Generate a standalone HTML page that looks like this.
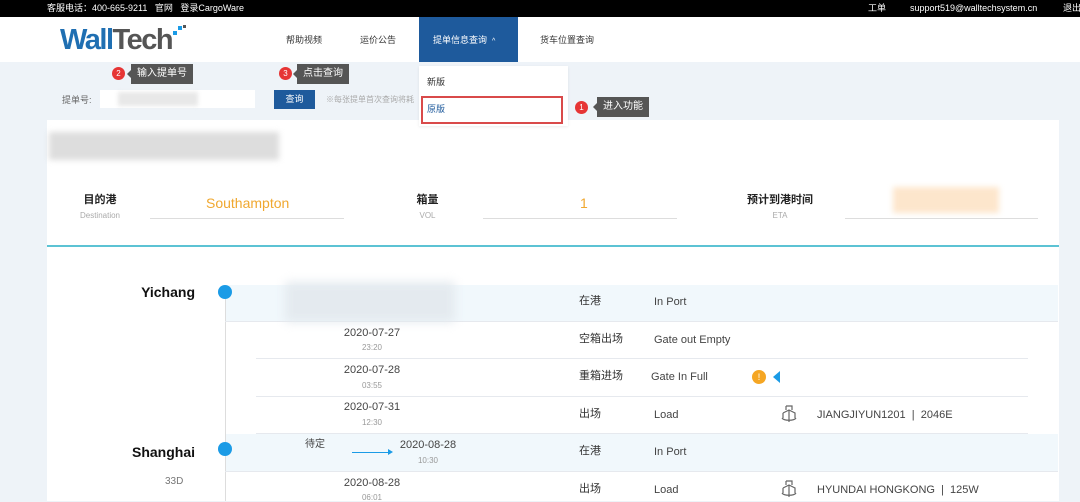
<!DOCTYPE html>
<html><head><meta charset="utf-8"><style>
*{margin:0;padding:0;box-sizing:border-box}
body{width:1080px;height:501px;overflow:hidden;background:#eef3f8;font-family:"Liberation Sans","Noto Sans CJK SC",sans-serif;position:relative;color:#333}
.a{position:absolute;white-space:nowrap;line-height:1.15}
.top{left:0;top:0;width:1080px;height:17px;background:#000;color:#fff;font-size:9px;line-height:17px}
.hdr{left:0;top:17px;width:1080px;height:45px;background:#fff}
.nav{font-size:9px;color:#333;top:35px}
.tip{background:#555;color:#fff;font-size:10px;line-height:20px;height:20px;padding:0 6px}
.tip:before{content:"";position:absolute;left:-4px;top:6px;border:4px solid transparent;border-left:0;border-right-color:#555}
.num{width:13px;height:13px;border-radius:50%;background:#e63535;color:#fff;font-size:8px;text-align:center;line-height:13px}
.card{left:47px;top:120px;width:1012px;height:381px;background:#fff}
.lbl{font-size:11px;font-weight:bold;color:#222;text-align:center}
.sub{font-size:8px;color:#aaa;text-align:center}
.ul{height:1px;background:#ddd}
.dt{font-size:11px;color:#444;text-align:center;width:80px}
.tm{font-size:8px;color:#999;text-align:center;width:80px}
.cn{font-size:11px;color:#333;line-height:1}
.en{font-size:11px;color:#444}
.hl{background:#f1f8fc}
.ln{height:1px;background:#e6e9ee}
.city{font-size:14px;font-weight:bold;color:#111;text-align:right;width:100px}
.dot{width:14px;height:14px;border-radius:50%;background:#1b9be6}
</style></head><body>
<div class="a top"><span class="a" style="left:47px;line-height:17px">客服电话：400-665-9211 &nbsp;&nbsp;官网 &nbsp;&nbsp;登录CargoWare</span><span class="a" style="left:868px;line-height:17px">工单</span><span class="a" style="left:910px;line-height:17px">support519@walltechsystem.cn</span><span class="a" style="left:1063px;line-height:17px">退出</span></div>
<div class="a hdr"></div>
<div class="a" style="left:60px;top:23px;font-size:29px;font-weight:bold;letter-spacing:-1.5px;color:#1f6fb2;line-height:34px">Wall<span style="color:#555">Tech</span></div>
<div class="a" style="left:178px;top:26px;width:4px;height:4px;background:#1b9be6"></div>
<div class="a" style="left:173px;top:31px;width:4px;height:4px;background:#1b9be6"></div>
<div class="a" style="left:183px;top:25px;width:3px;height:3px;background:#555"></div>
<div class="a nav" style="left:286px">帮助视频</div>
<div class="a nav" style="left:360px">运价公告</div>
<div class="a" style="left:419px;top:17px;width:99px;height:45px;background:#1e5a9c"></div>
<div class="a nav" style="left:433px;color:#fff">提单信息查询 &nbsp;<span style="font-size:7px">^</span></div>
<div class="a nav" style="left:540px">货车位置查询</div>
<!-- tips -->
<div class="a num" style="left:112px;top:67px">2</div>
<div class="a tip" style="left:131px;top:64px">输入提单号</div>
<div class="a num" style="left:279px;top:67px">3</div>
<div class="a tip" style="left:297px;top:64px">点击查询</div>
<div class="a" style="left:62px;top:95px;font-size:9px;color:#666">提单号:</div>
<div class="a" style="left:100px;top:90px;width:155px;height:18px;background:#fff"></div>
<div class="a" style="left:118px;top:92px;width:80px;height:14px;background:#e8e8e8;filter:blur(2px)"></div>
<div class="a" style="left:274px;top:90px;width:41px;height:19px;background:#1e5a9c;color:#fff;font-size:9px;text-align:center;line-height:19px">查询</div>
<div class="a" style="left:326px;top:95px;font-size:8px;color:#aaa">※每张提单首次查询将耗</div>
<!-- card -->
<div class="a card"></div>
<!-- dropdown -->
<div class="a" style="left:419px;top:66px;width:149px;height:60px;background:#fff;box-shadow:0 1px 3px rgba(0,0,0,.08)"></div>
<div class="a" style="left:427px;top:77px;font-size:9px">新版</div>
<div class="a" style="left:421px;top:96px;width:142px;height:28px;border:2px solid #d94a4a"></div>
<div class="a" style="left:427px;top:104px;font-size:9px;color:#1e5a9c">原版</div>
<div class="a num" style="left:575px;top:101px">1</div>
<div class="a tip" style="left:597px;top:97px">进入功能</div>

<div class="a" style="left:49px;top:132px;width:230px;height:28px;background:#ddd;filter:blur(3px)"></div>
<div class="a lbl" style="left:70px;top:194px;width:60px">目的港</div>
<div class="a sub" style="left:70px;top:211px;width:60px">Destination</div>
<div class="a" style="left:206px;top:195px;font-size:14px;color:#f0a830">Southampton</div>
<div class="a ul" style="left:150px;top:218px;width:194px"></div>
<div class="a lbl" style="left:410px;top:194px;width:35px">箱量</div>
<div class="a sub" style="left:410px;top:211px;width:35px">VOL</div>
<div class="a" style="left:580px;top:195px;font-size:14px;color:#f0a830">1</div>
<div class="a ul" style="left:483px;top:218px;width:194px"></div>
<div class="a lbl" style="left:740px;top:194px;width:80px">预计到港时间</div>
<div class="a sub" style="left:740px;top:211px;width:80px">ETA</div>
<div class="a" style="left:893px;top:187px;width:106px;height:26px;background:#fde6cc;filter:blur(3px)"></div>
<div class="a ul" style="left:845px;top:218px;width:193px"></div>
<div class="a" style="left:47px;top:245px;width:1012px;height:2px;background:#5cc3d4"></div>
<!-- timeline -->
<div class="a hl" style="left:225px;top:285px;width:833px;height:36px"></div>
<div class="a hl" style="left:225px;top:434px;width:833px;height:37px"></div>
<div class="a" style="left:225px;top:299px;width:1px;height:202px;background:#ddd"></div>
<div class="a ln" style="left:225px;top:321px;width:833px"></div>
<div class="a ln" style="left:256px;top:358px;width:772px"></div>
<div class="a ln" style="left:256px;top:396px;width:772px"></div>
<div class="a ln" style="left:256px;top:433px;width:772px"></div>
<div class="a ln" style="left:225px;top:471px;width:833px"></div>
<div class="a" style="left:285px;top:282px;width:170px;height:40px;background:#e4eaef;filter:blur(5px)"></div>
<div class="a city" style="left:95px;top:284px">Yichang</div>
<div class="a dot" style="left:218px;top:285px"></div>
<div class="a city" style="left:95px;top:444px">Shanghai</div>
<div class="a dot" style="left:218px;top:442px"></div>
<div class="a" style="left:165px;top:476px;font-size:10px;color:#777">33D</div>
<div class="a cn" style="left:579px;top:296px">在港</div><div class="a en" style="left:654px;top:296px">In Port</div>
<div class="a dt" style="left:332px;top:327px">2020-07-27</div><div class="a tm" style="left:332px;top:343px">23:20</div>
<div class="a cn" style="left:579px;top:334px">空箱出场</div><div class="a en" style="left:654px;top:334px">Gate out Empty</div>
<div class="a dt" style="left:332px;top:364px">2020-07-28</div><div class="a tm" style="left:332px;top:381px">03:55</div>
<div class="a cn" style="left:579px;top:371px">重箱进场</div><div class="a en" style="left:651px;top:371px">Gate In Full</div>
<div class="a" style="left:752px;top:370px;width:14px;height:14px;border-radius:50%;background:#f5a623;color:#fff;font-size:9px;text-align:center;line-height:14px">!</div>
<div class="a" style="left:773px;top:371px;border:6px solid transparent;border-left:0;border-right:7px solid #1b9be6"></div>
<div class="a dt" style="left:332px;top:401px">2020-07-31</div><div class="a tm" style="left:332px;top:418px">12:30</div>
<div class="a cn" style="left:579px;top:409px">出场</div><div class="a en" style="left:654px;top:409px">Load</div>
<svg class="a" style="left:780px;top:404px" width="18" height="20" viewBox="0 0 18 20" fill="none" stroke="#666" stroke-width="1.2"><path d="M6 2h6v4M6 2v4M3 9l6-3 6 3v5M3 9v5M2 14c2 3 12 3 14 0M9 6v12"/></svg>
<div class="a en" style="left:817px;top:409px">JIANGJIYUN1201 &nbsp;| &nbsp;2046E</div>
<div class="a" style="left:305px;top:439px;font-size:10px;color:#444">待定</div>
<div class="a" style="left:352px;top:452px;width:38px;height:1px;background:#1b9be6"></div>
<div class="a" style="left:388px;top:449px;border:3px solid transparent;border-right:0;border-left:5px solid #1b9be6"></div>
<div class="a dt" style="left:388px;top:439px">2020-08-28</div><div class="a tm" style="left:388px;top:456px">10:30</div>
<div class="a cn" style="left:579px;top:446px">在港</div><div class="a en" style="left:654px;top:446px">In Port</div>
<div class="a dt" style="left:332px;top:477px">2020-08-28</div><div class="a tm" style="left:332px;top:493px">06:01</div>
<div class="a cn" style="left:579px;top:484px">出场</div><div class="a en" style="left:654px;top:484px">Load</div>
<svg class="a" style="left:780px;top:479px" width="18" height="20" viewBox="0 0 18 20" fill="none" stroke="#666" stroke-width="1.2"><path d="M6 2h6v4M6 2v4M3 9l6-3 6 3v5M3 9v5M2 14c2 3 12 3 14 0M9 6v12"/></svg>
<div class="a en" style="left:817px;top:484px">HYUNDAI HONGKONG &nbsp;| &nbsp;125W</div>
</body></html>
